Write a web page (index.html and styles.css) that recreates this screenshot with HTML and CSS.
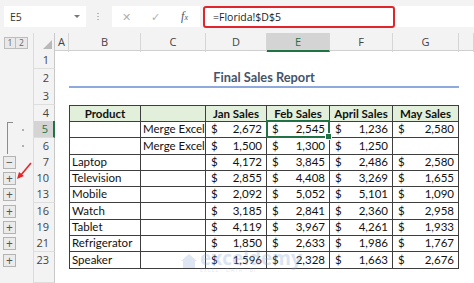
FILE: index.html
```html
<!DOCTYPE html>
<html lang="en">
<head>
  <meta charset="UTF-8">
  <meta name="viewport" content="width=device-width, initial-scale=1.0">
  <title>Final Sales Report - Excel</title>
  <link rel="stylesheet" href="styles.css">
</head>
<body>
  <div class="formula-bar">
    <div class="name-box">
      <span>E5</span>
      <span class="caret"></span>
    </div>
    <div class="grip"></div>
    <div class="fx-buttons">
      <span class="btn-cancel">✕</span>
      <span class="btn-enter">✓</span>
      <span class="btn-fx">f<small>x</small></span>
    </div>
    <div class="formula-input">=Florida!$D$5</div>
    <div class="formula-rest"></div>
  </div>

  <div class="sheet">
    <div class="row col-heads">
      <div class="gutter levels"><span>1</span><span>2</span></div>
      <div class="num corner"><span class="tri"></span></div>
      <div class="ch">A</div>
      <div class="ch">B</div>
      <div class="ch">C</div>
      <div class="ch">D</div>
      <div class="ch active">E</div>
      <div class="ch">F</div>
      <div class="ch">G</div>
      <div class="ch"></div>
    </div>

    <div class="row tall">
      <div class="gutter"></div>
      <div class="num">1</div>
      <div class="blank"></div>
    </div>
    <div class="row tall">
      <div class="gutter"></div>
      <div class="num">2</div>
      <div class="cell"></div>
      <div class="title">Final Sales Report</div>
      <div class="cell"></div>
    </div>
    <div class="row tall">
      <div class="gutter"></div>
      <div class="num">3</div>
      <div class="blank"></div>
    </div>

    <div class="row head">
      <div class="gutter"></div>
      <div class="num">4</div>
      <div class="cell"></div>
      <div class="t first">Product</div>
      <div class="t"></div>
      <div class="t">Jan Sales</div>
      <div class="t">Feb Sales</div>
      <div class="t">April Sales</div>
      <div class="t">May Sales</div>
      <div class="cell"></div>
    </div>

    <div class="row">
      <div class="gutter"><span class="bracket top"></span><span class="dot"></span></div>
      <div class="num active">5</div>
      <div class="cell"></div>
      <div class="t first"></div>
      <div class="t">Merge Excel</div>
      <div class="t money"><span>$</span><span>2,672</span></div>
      <div class="t money selected"><span>$</span><span>2,545</span></div>
      <div class="t money"><span>$</span><span>1,236</span></div>
      <div class="t money"><span>$</span><span>2,580</span></div>
      <div class="cell"></div>
    </div>
    <div class="row">
      <div class="gutter"><span class="bracket"></span><span class="dot"></span></div>
      <div class="num">6</div>
      <div class="cell"></div>
      <div class="t first"></div>
      <div class="t">Merge Excel</div>
      <div class="t money"><span>$</span><span>1,500</span></div>
      <div class="t money"><span>$</span><span>1,300</span></div>
      <div class="t money"><span>$</span><span>1,250</span></div>
      <div class="t"></div>
      <div class="cell"></div>
    </div>
    <div class="row">
      <div class="gutter"><span class="toggle">−</span></div>
      <div class="num">7</div>
      <div class="cell"></div>
      <div class="t first">Laptop</div>
      <div class="t"></div>
      <div class="t money"><span>$</span><span>4,172</span></div>
      <div class="t money"><span>$</span><span>3,845</span></div>
      <div class="t money"><span>$</span><span>2,486</span></div>
      <div class="t money"><span>$</span><span>2,580</span></div>
      <div class="cell"></div>
    </div>
    <div class="row">
      <div class="gutter"><span class="toggle">+</span></div>
      <div class="num">10</div>
      <div class="cell"></div>
      <div class="t first">Television</div>
      <div class="t"></div>
      <div class="t money"><span>$</span><span>2,855</span></div>
      <div class="t money"><span>$</span><span>4,408</span></div>
      <div class="t money"><span>$</span><span>3,269</span></div>
      <div class="t money"><span>$</span><span>1,655</span></div>
      <div class="cell"></div>
    </div>
    <div class="row">
      <div class="gutter"><span class="toggle">+</span></div>
      <div class="num">13</div>
      <div class="cell"></div>
      <div class="t first">Mobile</div>
      <div class="t"></div>
      <div class="t money"><span>$</span><span>2,092</span></div>
      <div class="t money"><span>$</span><span>5,052</span></div>
      <div class="t money"><span>$</span><span>5,101</span></div>
      <div class="t money"><span>$</span><span>1,090</span></div>
      <div class="cell"></div>
    </div>
    <div class="row">
      <div class="gutter"><span class="toggle">+</span></div>
      <div class="num">16</div>
      <div class="cell"></div>
      <div class="t first">Watch</div>
      <div class="t"></div>
      <div class="t money"><span>$</span><span>3,185</span></div>
      <div class="t money"><span>$</span><span>2,841</span></div>
      <div class="t money"><span>$</span><span>2,360</span></div>
      <div class="t money"><span>$</span><span>2,958</span></div>
      <div class="cell"></div>
    </div>
    <div class="row">
      <div class="gutter"><span class="toggle">+</span></div>
      <div class="num">19</div>
      <div class="cell"></div>
      <div class="t first">Tablet</div>
      <div class="t"></div>
      <div class="t money"><span>$</span><span>4,119</span></div>
      <div class="t money"><span>$</span><span>3,967</span></div>
      <div class="t money"><span>$</span><span>4,261</span></div>
      <div class="t money"><span>$</span><span>1,933</span></div>
      <div class="cell"></div>
    </div>
    <div class="row">
      <div class="gutter"><span class="toggle">+</span></div>
      <div class="num">21</div>
      <div class="cell"></div>
      <div class="t first">Refrigerator</div>
      <div class="t"></div>
      <div class="t money"><span>$</span><span>1,850</span></div>
      <div class="t money"><span>$</span><span>2,633</span></div>
      <div class="t money"><span>$</span><span>1,986</span></div>
      <div class="t money"><span>$</span><span>1,767</span></div>
      <div class="cell"></div>
    </div>
    <div class="row">
      <div class="gutter"><span class="toggle">+</span></div>
      <div class="num">23</div>
      <div class="cell"></div>
      <div class="t first">Speaker</div>
      <div class="t"></div>
      <div class="t money"><span>$</span><span>1,596</span></div>
      <div class="t money"><span>$</span><span>2,328</span></div>
      <div class="t money"><span>$</span><span>1,663</span></div>
      <div class="t money"><span>$</span><span>2,676</span></div>
      <div class="cell"></div>
    </div>

    <div class="row filler">
      <div class="gutter"></div>
      <div class="num"></div>
      <div class="blank"></div>
    </div>

    <svg class="arrow" width="20" height="22" viewBox="0 0 20 22">
      <line x1="17" y1="3" x2="7" y2="15" stroke="#e3262b" stroke-width="1.6"/>
      <polygon points="3,19 5,12 10,16" fill="#e3262b"/>
    </svg>

    <div class="watermark">
      <svg width="18" height="16" viewBox="0 0 18 16">
        <polygon points="9,1 17,8 15,8 15,15 3,15 3,8 1,8" fill="#8aa6d6"/>
      </svg>
      <div class="wm-text">
        <span class="wm-name">exceldemy</span>
        <span class="wm-sub">EXCEL · DATA · BI</span>
      </div>
    </div>
  </div>
</body>
</html>
```

FILE: styles.css
```css
* {
  margin: 0;
  padding: 0;
  box-sizing: border-box;
}

body {
  width: 474px;
  height: 283px;
  overflow: hidden;
  background: #fff;
  font-family: 'Open Sans', 'Liberation Sans', sans-serif;
  color: #333;
}

/* formula bar */

.formula-bar {
  display: flex;
  align-items: center;
  height: 33px;
  padding-left: 4px;
  background: #f3f3f3;
}

.name-box {
  width: 82px;
  height: 21px;
  background: #fff;
  display: flex;
  align-items: center;
  justify-content: space-between;
  padding: 0 6px;
  font-size: 10.5px;
  color: #333;
}

.caret {
  border-left: 3px solid transparent;
  border-right: 3px solid transparent;
  border-top: 3px solid #777;
}

.grip {
  width: 2px;
  height: 9px;
  margin: 0 13px 0 11px;
  background-image: radial-gradient(circle, #b8b8b8 0.9px, transparent 1.1px);
  background-size: 2px 3px;
}

.fx-buttons {
  width: 88px;
  height: 21px;
  background: #fff;
  display: flex;
  align-items: center;
}

.fx-buttons span {
  width: 29px;
  text-align: center;
  color: #b0b0b0;
  font-size: 11px;
}

.fx-buttons .btn-fx {
  color: #555;
  font-family: 'Liberation Serif', serif;
  font-style: italic;
  font-size: 12px;
}

.btn-fx small {
  font-size: 8px;
}

.formula-input {
  width: 192px;
  height: 22px;
  margin-left: 3px;
  background: #fff;
  border: 2px solid #e0262c;
  border-radius: 3px;
  display: flex;
  align-items: center;
  padding-left: 8px;
  font-size: 10.5px;
  color: #222;
}

.formula-rest {
  flex: 1;
  height: 21px;
  background: #fff;
}

/* sheet grid */

.sheet {
  position: relative;
  height: 250px;
  display: flex;
  flex-direction: column;
}

.row {
  display: grid;
  grid-template-columns: 34px 21px 14px 72px 65px 61px 63px 63px 66px 1fr;
  height: 16.3px;
}

.row.col-heads,
.row.tall {
  height: 18px;
}

.row.filler {
  flex: 1;
}

.gutter {
  background: #f3f3f3;
  border-right: 1px solid #dcdcdc;
  display: flex;
  align-items: center;
  padding-left: 3px;
}

.num {
  background: #f3f3f3;
  border-right: 1px solid #c8c8c8;
  border-bottom: 1px solid #dedede;
  font-size: 11px;
  color: #444;
  text-align: right;
  padding-right: 5px;
  line-height: 16px;
}

.row.tall .num {
  line-height: 17px;
}

.num.active {
  background: #d4d4d4;
  color: #217346;
  border-right: 2px solid #217346;
}

.blank {
  grid-column: 3 / -1;
}

/* column headers */

.col-heads {
  background: #f3f3f3;
  border-bottom: 1px solid #cfcfcf;
}

.col-heads .gutter,
.col-heads .num {
  border-bottom: none;
}

.levels {
  padding-left: 4px;
}

.levels span {
  width: 12px;
  height: 12px;
  border: 1px solid #bdbdbd;
  background: #e9e9e9;
  font-size: 8.5px;
  line-height: 10px;
  text-align: center;
  color: #666;
}

.levels span + span {
  border-left: none;
}

.corner {
  display: flex;
  align-items: flex-end;
  justify-content: flex-end;
  padding: 0 2px 3px 0;
}

.tri {
  width: 0;
  height: 0;
  border-left: 9px solid transparent;
  border-bottom: 9px solid #b9b9b9;
}

.ch {
  font-size: 11px;
  color: #444;
  text-align: center;
  line-height: 17px;
  border-right: 1px solid #d6d6d6;
}

.ch.active {
  background: #d4d4d4;
  color: #217346;
  border-bottom: 2px solid #217346;
}

/* title */

.title {
  grid-column: 4 / 10;
  font-family: Lato, 'Liberation Sans', sans-serif;
  font-weight: bold;
  font-size: 12.8px;
  color: #44546a;
  text-align: center;
  line-height: 17px;
  border-bottom: 2px solid #8ea9db;
}

/* table */

.t {
  font-family: Lato, 'Liberation Sans', sans-serif;
  font-size: 11.5px;
  color: #111;
  line-height: 15px;
  padding: 0 2px;
  border-right: 1px solid #3e3e3e;
  border-bottom: 1px solid #3e3e3e;
  white-space: nowrap;
  position: relative;
}

.t.first {
  border-left: 1px solid #3e3e3e;
}

.row.head .t {
  border-top: 1px solid #3e3e3e;
  background: #e2efda;
  font-weight: bold;
  text-align: center;
}

.t.money {
  display: flex;
  justify-content: space-between;
  padding: 0 4px 0 5px;
}

.t.selected::after {
  content: '';
  position: absolute;
  top: -1px;
  left: -1px;
  right: -1px;
  bottom: -1px;
  border: 2px solid #217346;
}

.t.selected::before {
  content: '';
  position: absolute;
  right: -3px;
  bottom: -3px;
  width: 5px;
  height: 5px;
  background: #217346;
  border: 1px solid #fff;
  z-index: 1;
}

/* outline controls */

.bracket {
  align-self: stretch;
  width: 6px;
  margin-left: 4px;
  border-left: 1px solid #8c8c8c;
}

.bracket.top {
  margin-top: 1px;
  border-top: 1px solid #8c8c8c;
}

.dot {
  width: 2px;
  height: 2px;
  border-radius: 50%;
  background: #9a9a9a;
  margin-left: 9px;
}

.toggle {
  width: 13px;
  height: 13px;
  border: 1px solid #b3b3b3;
  background: #ebebeb;
  color: #555;
  font-size: 12px;
  line-height: 11px;
  text-align: center;
}

/* overlays */

.arrow {
  position: absolute;
  left: 14px;
  top: 127px;
}

.watermark {
  position: absolute;
  left: 180px;
  top: 216px;
  display: flex;
  align-items: center;
  gap: 2px;
  opacity: 0.28;
}

.wm-text {
  display: flex;
  flex-direction: column;
  line-height: 1;
}

.wm-name {
  font-family: 'Open Sans', sans-serif;
  font-weight: bold;
  font-size: 19px;
  color: #7f9fd2;
}

.wm-sub {
  font-size: 5px;
  letter-spacing: 1px;
  color: #7f9fd2;
}
```
